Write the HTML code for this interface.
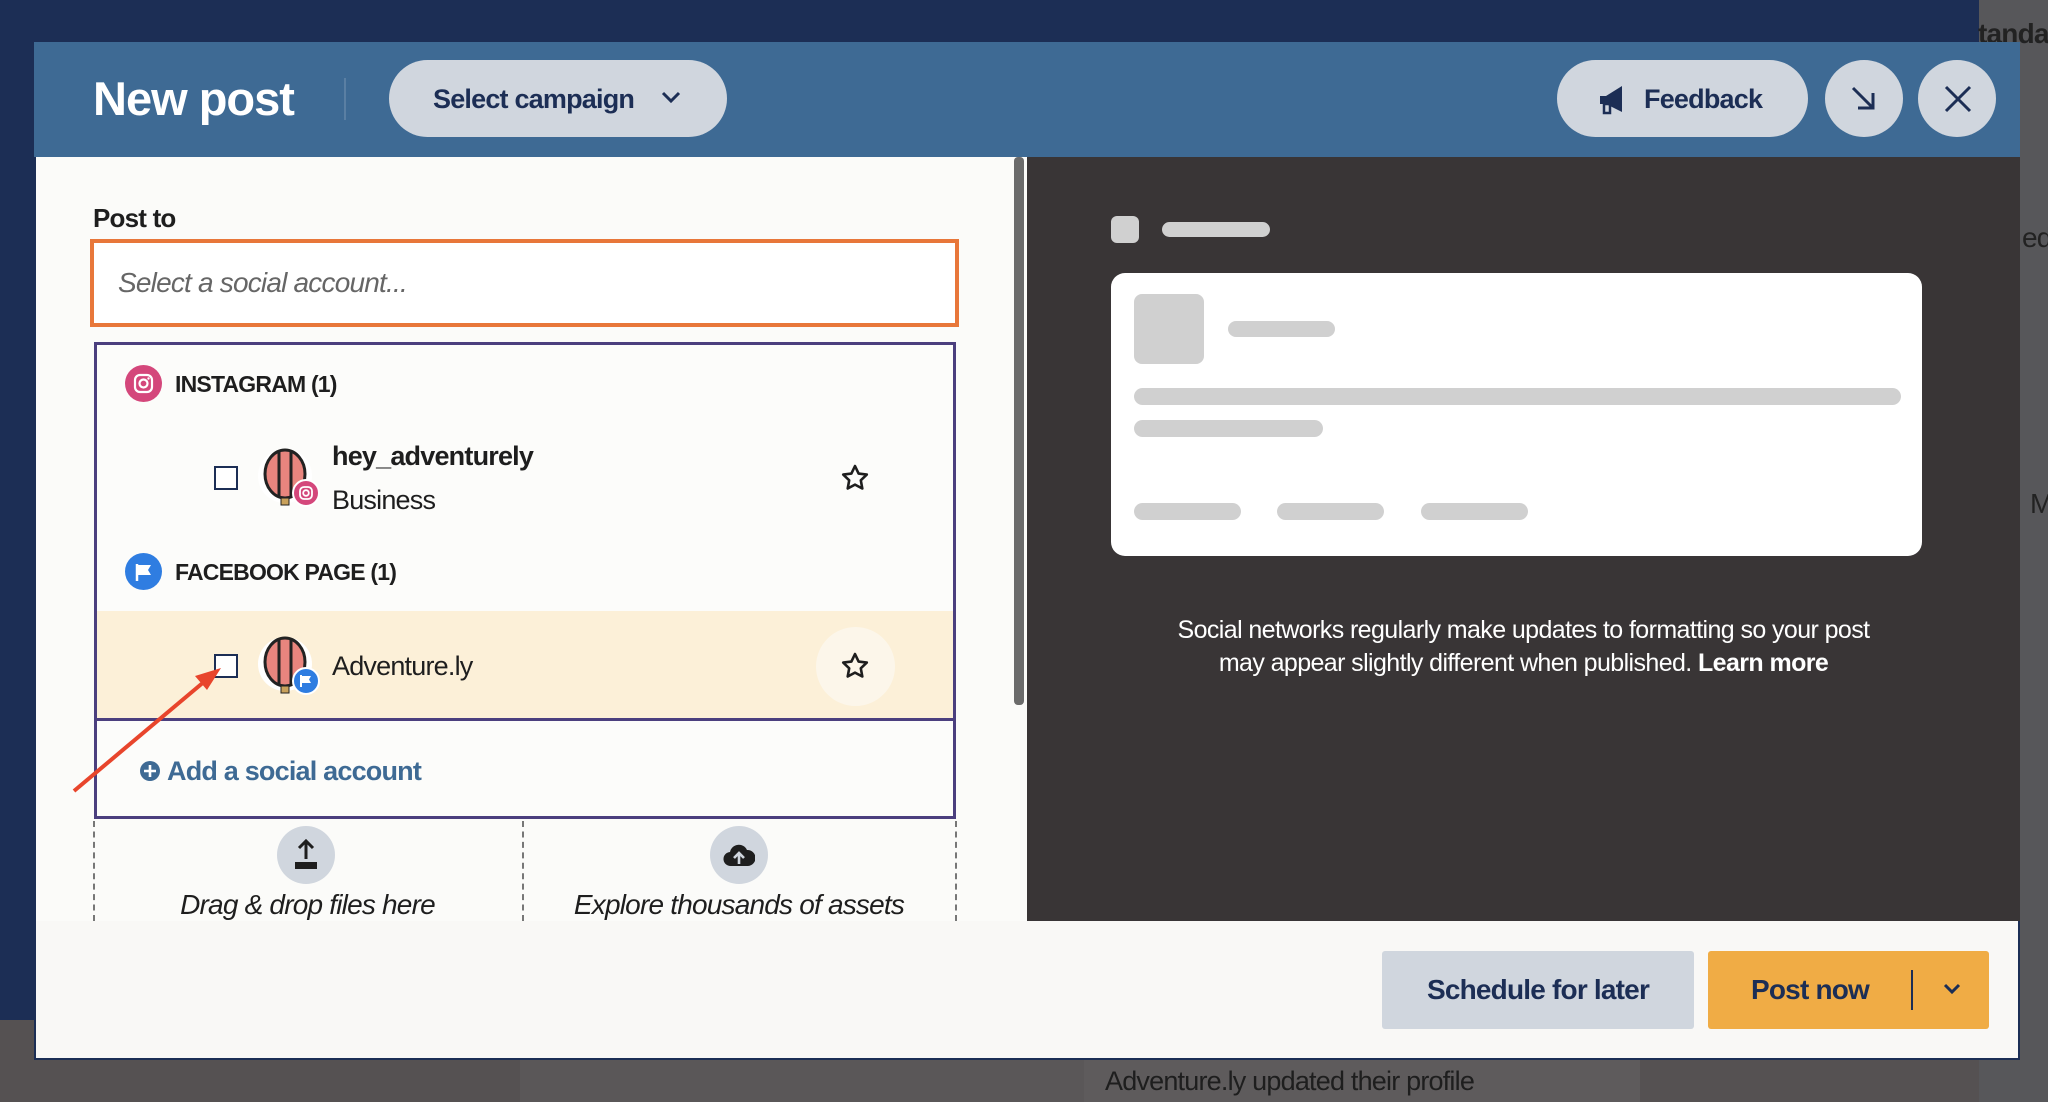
<!DOCTYPE html>
<html><head><meta charset="utf-8"><style>
*{margin:0;padding:0;box-sizing:border-box}
body{width:2048px;height:1102px;overflow:hidden;background:#555152;font-family:"Liberation Sans",sans-serif;position:relative}
.a{position:absolute}
.t{letter-spacing:-0.8px;white-space:nowrap}
.bar{position:absolute;background:#d0d0d0;border-radius:9px}
</style></head><body>
<div class="a" style="left:0;top:0;width:2048px;height:1020px;background:#1c2e55"></div>
<div class="a" style="left:1979px;top:0;width:69px;height:1102px;background:#57575a"></div>
<div class="a t" style="left:1978px;top:18px;font-size:28px;font-weight:bold;color:#222">tanda</div>
<div class="a t" style="left:2022px;top:222px;font-size:28px;color:#222">ed</div>
<div class="a t" style="left:2030px;top:488px;font-size:28px;color:#222">M</div>
<div class="a" style="left:520px;top:1058px;width:1120px;height:44px;background:#5a5758"></div>
<div class="a" style="left:1084px;top:1058px;width:556px;height:44px;background:#5e5b5c"></div>
<div class="a t" style="left:1105px;top:1066px;font-size:27px;color:#1e1e1e">Adventure.ly updated their profile</div>

<div class="a" style="left:34px;top:42px;width:1986px;height:1018px;background:#fbfbf9;border:2px solid #1c2e55"></div>
<div class="a" style="left:34px;top:42px;width:1986px;height:115px;background:#3e6a94"></div>
<div class="a t" style="left:93px;top:71px;font-size:47px;font-weight:bold;color:#fff;letter-spacing:-1px">New post</div>
<div class="a" style="left:344px;top:78px;width:2px;height:42px;background:#5a7fa3"></div>
<div class="a" style="left:389px;top:60px;width:338px;height:77px;background:#d0d6de;border-radius:39px"></div>
<div class="a t" style="left:433px;top:84px;font-size:27px;font-weight:bold;color:#1c2e55">Select campaign</div>
<svg class="a" style="left:660px;top:90px" width="22" height="16"><path d="M3 3l8 8 8-8" stroke="#1c2e55" stroke-width="3" fill="none"/></svg>

<div class="a" style="left:1557px;top:60px;width:251px;height:77px;background:#d0d6de;border-radius:39px"></div>
<svg class="a" style="left:1598px;top:84px" width="32" height="32"><path d="M2 12h6l16-10v26L8 20H2z" fill="#1c2e55"/><rect x="6" y="20" width="6" height="9" fill="none" stroke="#1c2e55" stroke-width="2.5"/></svg>
<div class="a t" style="left:1644px;top:84px;font-size:27px;font-weight:bold;color:#1c2e55">Feedback</div>
<div class="a" style="left:1825px;top:60px;width:78px;height:77px;background:#d0d6de;border-radius:50%"></div>
<svg class="a" style="left:1848px;top:83px" width="32" height="32"><path d="M5 5l20 20M25 10v15H10" stroke="#1c2e55" stroke-width="3" fill="none"/></svg>
<div class="a" style="left:1918px;top:60px;width:78px;height:77px;background:#d0d6de;border-radius:50%"></div>
<svg class="a" style="left:1943px;top:84px" width="30" height="30"><path d="M3 3l24 24M27 3L3 27" stroke="#1c2e55" stroke-width="3"/></svg>

<div class="a" style="left:1027px;top:157px;width:993px;height:764px;background:#393536"></div>
<div class="a" style="left:1014px;top:157px;width:10px;height:548px;background:#6b6b6b;border-radius:4px"></div>
<div class="bar" style="left:1111px;top:216px;width:28px;height:27px;border-radius:6px"></div>
<div class="bar" style="left:1162px;top:222px;width:108px;height:15px"></div>
<div class="a" style="left:1111px;top:273px;width:811px;height:283px;background:#fff;border-radius:14px"></div>
<div class="bar" style="left:1134px;top:294px;width:70px;height:70px;border-radius:8px"></div>
<div class="bar" style="left:1228px;top:321px;width:107px;height:16px"></div>
<div class="bar" style="left:1134px;top:388px;width:767px;height:17px"></div>
<div class="bar" style="left:1134px;top:420px;width:189px;height:17px"></div>
<div class="bar" style="left:1134px;top:503px;width:107px;height:17px"></div>
<div class="bar" style="left:1277px;top:503px;width:107px;height:17px"></div>
<div class="bar" style="left:1421px;top:503px;width:107px;height:17px"></div>
<div class="a" style="left:1027px;top:614px;width:993px;text-align:center;font-size:25px;line-height:33px;color:#fff;letter-spacing:-0.6px;white-space:nowrap">Social networks regularly make updates to formatting so your post<br>may appear slightly different when published. <b>Learn more</b></div>

<div class="a t" style="left:93px;top:203px;font-size:26px;font-weight:bold;color:#1e1e1e">Post to</div>
<div class="a" style="left:90px;top:239px;width:869px;height:88px;border:4px solid #e8773a;background:#fff"></div>
<div class="a t" style="left:118px;top:267px;font-size:28px;font-style:italic;color:#666">Select a social account...</div>

<div class="a" style="left:94px;top:342px;width:862px;height:477px;border:3px solid #4b3f7e;background:#fcfcfa"></div>
<div class="a" style="left:97px;top:611px;width:856px;height:108px;background:#fcf0d8"></div>
<div class="a" style="left:94px;top:718px;width:862px;height:3px;background:#4b3f7e"></div>

<div class="a" style="left:125px;top:365px;width:37px;height:37px;border-radius:50%;background:#d4477b"></div>
<svg class="a" style="left:133px;top:373px" width="21" height="21"><rect x="2" y="2" width="17" height="17" rx="5" fill="none" stroke="#fff" stroke-width="2.2"/><circle cx="10.5" cy="10.5" r="4" fill="none" stroke="#fff" stroke-width="2.2"/><circle cx="15.5" cy="5.5" r="1.2" fill="#fff"/></svg>
<div class="a t" style="left:175px;top:371px;font-size:23px;font-weight:bold;color:#1e1e1e">INSTAGRAM (1)</div>

<div class="a" style="left:214px;top:466px;width:24px;height:24px;border:2px solid #1c2e55;background:#fff"></div>
<svg class="a" style="left:256px;top:448px" width="64" height="64"><ellipse cx="29" cy="28" rx="27" ry="27" fill="#fff"/><ellipse cx="29" cy="26" rx="20" ry="24" fill="#e8857e" stroke="#222" stroke-width="3"/><path d="M23 4v44M35 4v44" stroke="#222" stroke-width="3"/><rect x="25" y="50" width="8" height="7" fill="#c9a15b" stroke="#222"/></svg>
<div class="a" style="left:292px;top:479px;width:28px;height:28px;border-radius:50%;background:#d4477b;border:2px solid #fff"></div>
<svg class="a" style="left:298px;top:485px" width="16" height="16"><rect x="2" y="2" width="12" height="12" rx="4" fill="none" stroke="#fff" stroke-width="1.8"/><circle cx="8" cy="8" r="2.8" fill="none" stroke="#fff" stroke-width="1.8"/></svg>
<div class="a t" style="left:332px;top:441px;font-size:27px;font-weight:bold;color:#1e1e1e">hey_adventurely</div>
<div class="a t" style="left:332px;top:485px;font-size:27px;color:#1e1e1e">Business</div>
<svg class="a" style="left:840px;top:463px" width="30" height="30"><path d="M15 3l3.6 7.6 8.2 1-6 5.7 1.5 8.2L15 21.6l-7.3 3.9 1.5-8.2-6-5.7 8.2-1z" fill="none" stroke="#1e1e1e" stroke-width="2.6" stroke-linejoin="round"/></svg>

<div class="a" style="left:125px;top:553px;width:37px;height:37px;border-radius:50%;background:#2f7de1"></div>
<svg class="a" style="left:133px;top:561px" width="22" height="22"><path d="M4 3v17" stroke="#fff" stroke-width="2.5"/><path d="M5 4h13l-3 5 3 5H5z" fill="#fff"/></svg>
<div class="a t" style="left:175px;top:559px;font-size:23px;font-weight:bold;color:#1e1e1e">FACEBOOK PAGE (1)</div>

<div class="a" style="left:214px;top:654px;width:24px;height:24px;border:2px solid #1c2e55;background:#fff"></div>
<svg class="a" style="left:256px;top:636px" width="64" height="64"><ellipse cx="29" cy="28" rx="27" ry="27" fill="#fff"/><ellipse cx="29" cy="26" rx="20" ry="24" fill="#e8857e" stroke="#222" stroke-width="3"/><path d="M23 4v44M35 4v44" stroke="#222" stroke-width="3"/><rect x="25" y="50" width="8" height="7" fill="#c9a15b" stroke="#222"/></svg>
<div class="a" style="left:292px;top:667px;width:28px;height:28px;border-radius:50%;background:#2f7de1;border:2px solid #fff"></div>
<svg class="a" style="left:298px;top:673px" width="16" height="16"><path d="M3 2v12" stroke="#fff" stroke-width="2"/><path d="M4 3h9l-2 3.5 2 3.5H4z" fill="#fff"/></svg>
<div class="a t" style="left:332px;top:651px;font-size:27px;color:#1e1e1e">Adventure.ly</div>
<div class="a" style="left:816px;top:627px;width:79px;height:79px;border-radius:50%;background:#fcf6ea"></div>
<svg class="a" style="left:840px;top:651px" width="30" height="30"><path d="M15 3l3.6 7.6 8.2 1-6 5.7 1.5 8.2L15 21.6l-7.3 3.9 1.5-8.2-6-5.7 8.2-1z" fill="none" stroke="#1e1e1e" stroke-width="2.6" stroke-linejoin="round"/></svg>

<svg class="a" style="left:139px;top:760px" width="22" height="22"><circle cx="11" cy="11" r="10" fill="#3e6a94"/><path d="M11 5v12M5 11h12" stroke="#fff" stroke-width="2.6"/></svg>
<div class="a t" style="left:167px;top:756px;font-size:27px;font-weight:bold;color:#3e6a94">Add a social account</div>

<div class="a" style="left:93px;top:821px;width:0;height:100px;border-left:2px dashed #777"></div>
<div class="a" style="left:522px;top:821px;width:0;height:100px;border-left:2px dashed #777"></div>
<div class="a" style="left:955px;top:821px;width:0;height:100px;border-left:2px dashed #777"></div>
<div class="a" style="left:277px;top:826px;width:58px;height:58px;border-radius:50%;background:#d0d6de"></div>
<svg class="a" style="left:290px;top:837px" width="32" height="36"><path d="M16 4v18M9 11l7-7 7 7" stroke="#1e1e1e" stroke-width="3" fill="none"/><rect x="5" y="25" width="22" height="7" fill="#1e1e1e"/></svg>
<div class="a" style="left:710px;top:826px;width:58px;height:58px;border-radius:50%;background:#d0d6de"></div>
<svg class="a" style="left:723px;top:840px" width="32" height="30"><path d="M8 26a7 7 0 0 1-1-14 9 9 0 0 1 17-2 7 7 0 0 1 1 16z" fill="#1e1e1e"/><path d="M16 24v-10M11 18l5-5 5 5" stroke="#d0d6de" stroke-width="2.6" fill="none"/></svg>
<div class="a t" style="left:93px;top:889px;width:429px;text-align:center;font-size:28px;font-style:italic;color:#1e1e1e">Drag &amp; drop files here</div>
<div class="a t" style="left:522px;top:889px;width:434px;text-align:center;font-size:28px;font-style:italic;color:#1e1e1e">Explore thousands of assets</div>

<div class="a" style="left:36px;top:921px;width:1982px;height:137px;background:#f9f8f6"></div>
<div class="a" style="left:1382px;top:951px;width:312px;height:78px;background:#d0d6de;border-radius:3px"></div>
<div class="a t" style="left:1382px;top:974px;width:312px;text-align:center;font-size:28px;font-weight:bold;color:#1c2e55">Schedule for later</div>
<div class="a" style="left:1708px;top:951px;width:281px;height:78px;background:#f0ac45;border-radius:3px"></div>
<div class="a t" style="left:1751px;top:974px;font-size:28px;font-weight:bold;color:#1c2e55">Post now</div>
<div class="a" style="left:1911px;top:970px;width:2px;height:40px;background:#1c2e55"></div>
<svg class="a" style="left:1942px;top:982px" width="20" height="14"><path d="M3 3l7 7 7-7" stroke="#1c2e55" stroke-width="3" fill="none"/></svg>

<svg class="a" style="left:0;top:0" width="300" height="820"><path d="M74 791L205 681" stroke="#e8452c" stroke-width="4"/><path d="M221 668l-26 8 12 14z" fill="#e8452c"/></svg>
</body></html>
